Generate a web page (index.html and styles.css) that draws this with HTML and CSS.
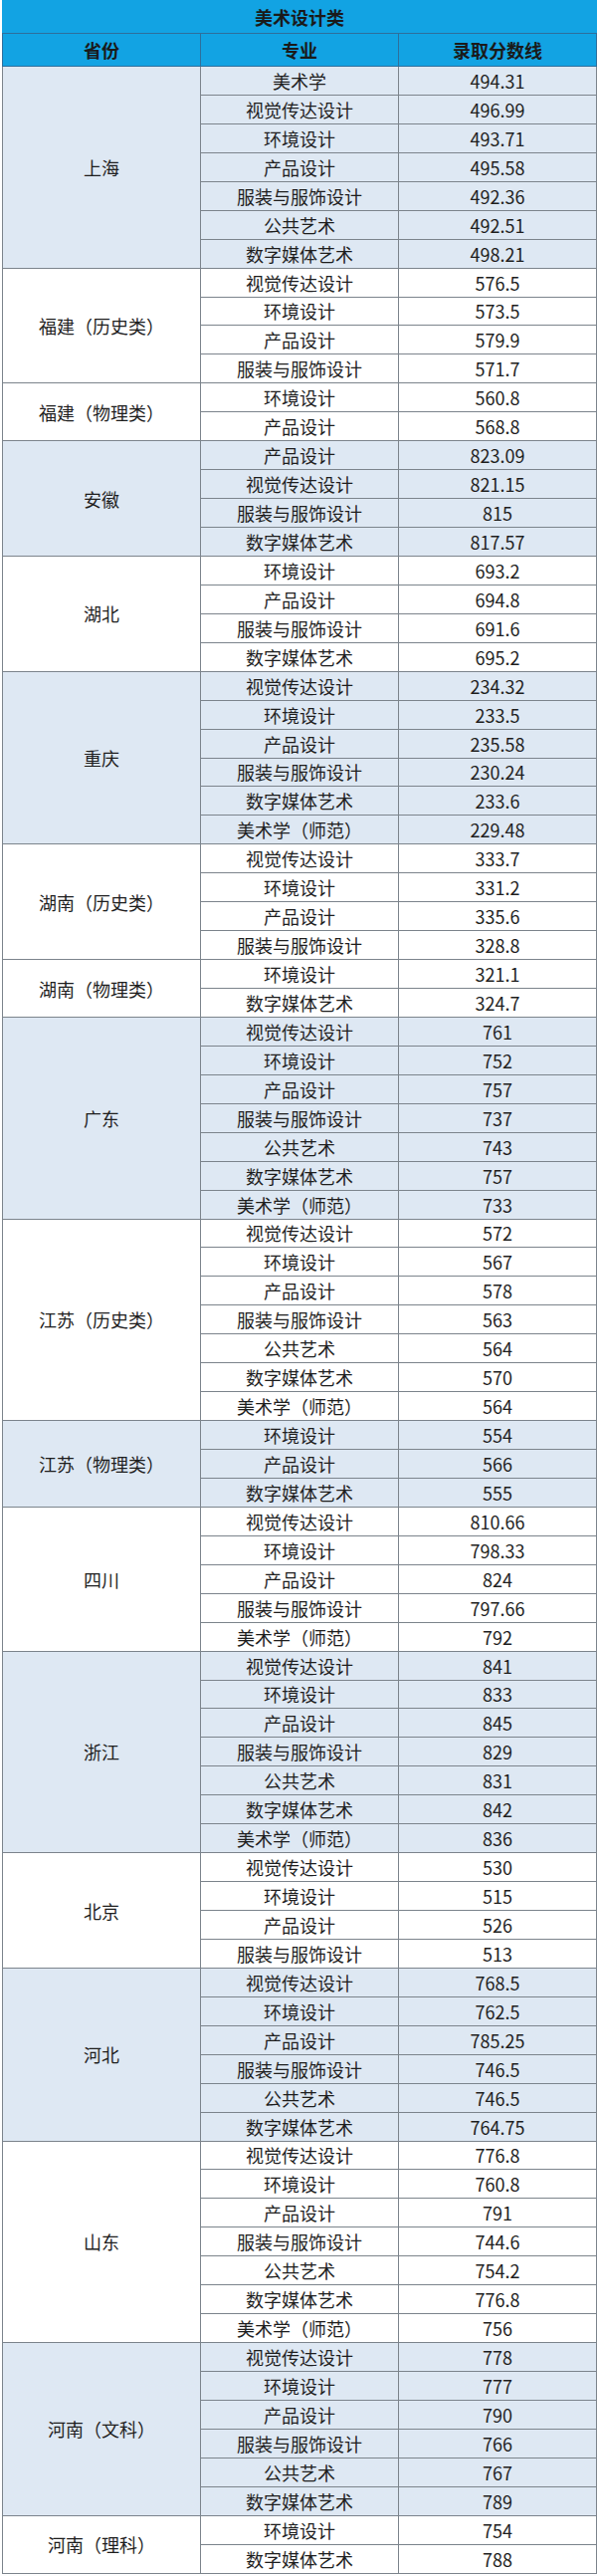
FILE: index.html
```html
<!DOCTYPE html>
<html lang="zh-CN">
<head>
<meta charset="utf-8">
<title>美术设计类</title>
<link rel="stylesheet" href="styles.css">
</head>
<body>
<table class="score">
<colgroup><col class="c1"><col class="c2"><col class="c3"></colgroup>
<thead>
<tr class="title"><th colspan="3">美术设计类</th></tr>
<tr class="head"><th>省份</th><th>专业</th><th>录取分数线</th></tr>
</thead>
<tbody class="shade">
<tr><td rowspan="7" class="prov">上海</td><td>美术学</td><td>494.31</td></tr>
<tr><td>视觉传达设计</td><td>496.99</td></tr>
<tr><td>环境设计</td><td>493.71</td></tr>
<tr><td>产品设计</td><td>495.58</td></tr>
<tr><td>服装与服饰设计</td><td>492.36</td></tr>
<tr><td>公共艺术</td><td>492.51</td></tr>
<tr><td>数字媒体艺术</td><td>498.21</td></tr>
</tbody>
<tbody>
<tr><td rowspan="4" class="prov">福建（历史类）</td><td>视觉传达设计</td><td>576.5</td></tr>
<tr><td>环境设计</td><td>573.5</td></tr>
<tr><td>产品设计</td><td>579.9</td></tr>
<tr><td>服装与服饰设计</td><td>571.7</td></tr>
</tbody>
<tbody>
<tr><td rowspan="2" class="prov">福建（物理类）</td><td>环境设计</td><td>560.8</td></tr>
<tr><td>产品设计</td><td>568.8</td></tr>
</tbody>
<tbody class="shade">
<tr><td rowspan="4" class="prov">安徽</td><td>产品设计</td><td>823.09</td></tr>
<tr><td>视觉传达设计</td><td>821.15</td></tr>
<tr><td>服装与服饰设计</td><td>815</td></tr>
<tr><td>数字媒体艺术</td><td>817.57</td></tr>
</tbody>
<tbody>
<tr><td rowspan="4" class="prov">湖北</td><td>环境设计</td><td>693.2</td></tr>
<tr><td>产品设计</td><td>694.8</td></tr>
<tr><td>服装与服饰设计</td><td>691.6</td></tr>
<tr><td>数字媒体艺术</td><td>695.2</td></tr>
</tbody>
<tbody class="shade">
<tr><td rowspan="6" class="prov">重庆</td><td>视觉传达设计</td><td>234.32</td></tr>
<tr><td>环境设计</td><td>233.5</td></tr>
<tr><td>产品设计</td><td>235.58</td></tr>
<tr><td>服装与服饰设计</td><td>230.24</td></tr>
<tr><td>数字媒体艺术</td><td>233.6</td></tr>
<tr><td>美术学（师范）</td><td>229.48</td></tr>
</tbody>
<tbody>
<tr><td rowspan="4" class="prov">湖南（历史类）</td><td>视觉传达设计</td><td>333.7</td></tr>
<tr><td>环境设计</td><td>331.2</td></tr>
<tr><td>产品设计</td><td>335.6</td></tr>
<tr><td>服装与服饰设计</td><td>328.8</td></tr>
</tbody>
<tbody>
<tr><td rowspan="2" class="prov">湖南（物理类）</td><td>环境设计</td><td>321.1</td></tr>
<tr><td>数字媒体艺术</td><td>324.7</td></tr>
</tbody>
<tbody class="shade">
<tr><td rowspan="7" class="prov">广东</td><td>视觉传达设计</td><td>761</td></tr>
<tr><td>环境设计</td><td>752</td></tr>
<tr><td>产品设计</td><td>757</td></tr>
<tr><td>服装与服饰设计</td><td>737</td></tr>
<tr><td>公共艺术</td><td>743</td></tr>
<tr><td>数字媒体艺术</td><td>757</td></tr>
<tr><td>美术学（师范）</td><td>733</td></tr>
</tbody>
<tbody>
<tr><td rowspan="7" class="prov">江苏（历史类）</td><td>视觉传达设计</td><td>572</td></tr>
<tr><td>环境设计</td><td>567</td></tr>
<tr><td>产品设计</td><td>578</td></tr>
<tr><td>服装与服饰设计</td><td>563</td></tr>
<tr><td>公共艺术</td><td>564</td></tr>
<tr><td>数字媒体艺术</td><td>570</td></tr>
<tr><td>美术学（师范）</td><td>564</td></tr>
</tbody>
<tbody class="shade">
<tr><td rowspan="3" class="prov">江苏（物理类）</td><td>环境设计</td><td>554</td></tr>
<tr><td>产品设计</td><td>566</td></tr>
<tr><td>数字媒体艺术</td><td>555</td></tr>
</tbody>
<tbody>
<tr><td rowspan="5" class="prov">四川</td><td>视觉传达设计</td><td>810.66</td></tr>
<tr><td>环境设计</td><td>798.33</td></tr>
<tr><td>产品设计</td><td>824</td></tr>
<tr><td>服装与服饰设计</td><td>797.66</td></tr>
<tr><td>美术学（师范）</td><td>792</td></tr>
</tbody>
<tbody class="shade">
<tr><td rowspan="7" class="prov">浙江</td><td>视觉传达设计</td><td>841</td></tr>
<tr><td>环境设计</td><td>833</td></tr>
<tr><td>产品设计</td><td>845</td></tr>
<tr><td>服装与服饰设计</td><td>829</td></tr>
<tr><td>公共艺术</td><td>831</td></tr>
<tr><td>数字媒体艺术</td><td>842</td></tr>
<tr><td>美术学（师范）</td><td>836</td></tr>
</tbody>
<tbody>
<tr><td rowspan="4" class="prov">北京</td><td>视觉传达设计</td><td>530</td></tr>
<tr><td>环境设计</td><td>515</td></tr>
<tr><td>产品设计</td><td>526</td></tr>
<tr><td>服装与服饰设计</td><td>513</td></tr>
</tbody>
<tbody class="shade">
<tr><td rowspan="6" class="prov">河北</td><td>视觉传达设计</td><td>768.5</td></tr>
<tr><td>环境设计</td><td>762.5</td></tr>
<tr><td>产品设计</td><td>785.25</td></tr>
<tr><td>服装与服饰设计</td><td>746.5</td></tr>
<tr><td>公共艺术</td><td>746.5</td></tr>
<tr><td>数字媒体艺术</td><td>764.75</td></tr>
</tbody>
<tbody>
<tr><td rowspan="7" class="prov">山东</td><td>视觉传达设计</td><td>776.8</td></tr>
<tr><td>环境设计</td><td>760.8</td></tr>
<tr><td>产品设计</td><td>791</td></tr>
<tr><td>服装与服饰设计</td><td>744.6</td></tr>
<tr><td>公共艺术</td><td>754.2</td></tr>
<tr><td>数字媒体艺术</td><td>776.8</td></tr>
<tr><td>美术学（师范）</td><td>756</td></tr>
</tbody>
<tbody class="shade">
<tr><td rowspan="6" class="prov">河南（文科）</td><td>视觉传达设计</td><td>778</td></tr>
<tr><td>环境设计</td><td>777</td></tr>
<tr><td>产品设计</td><td>790</td></tr>
<tr><td>服装与服饰设计</td><td>766</td></tr>
<tr><td>公共艺术</td><td>767</td></tr>
<tr><td>数字媒体艺术</td><td>789</td></tr>
</tbody>
<tbody>
<tr><td rowspan="2" class="prov">河南（理科）</td><td>环境设计</td><td>754</td></tr>
<tr><td>数字媒体艺术</td><td>788</td></tr>
</tbody>
</table>
</body>
</html>
```
FILE: styles.css
```css
html, body {
  margin: 0;
  padding: 0;
  background: #ffffff;
}

body {
  font-family: "Noto Sans CJK SC", "Noto Sans", sans-serif;
  color: #1e1e1e;
}

.score {
  border-collapse: collapse;
  table-layout: fixed;
  width: 597px;
  margin: 0 0 0 2px;
  font-size: 18px;
  line-height: 20px;
}

.score .c1 { width: 199px; }
.score .c2 { width: 199px; }
.score .c3 { width: 199px; }

.score th,
.score td {
  padding: 0;
  text-align: center;
  vertical-align: middle;
  border: 1px solid #7c848c;
  white-space: nowrap;
  overflow: hidden;
}

.score thead th {
  background: #12a3e3;
  font-weight: bold;
  color: #1a1a1a;
  border-color: #2d6f9c;
}

.score .title th {
  height: 33px;
  border-top: none;
  border-left-color: #12a3e3;
  border-right-color: #12a3e3;
}

.score .head th {
  height: 32px;
}

.score tbody tr {
  height: 28.94px;
}

.score tbody.shade td {
  background: #dee8f3;
}

.score .prov {
  font-size: 18px;
}
```
